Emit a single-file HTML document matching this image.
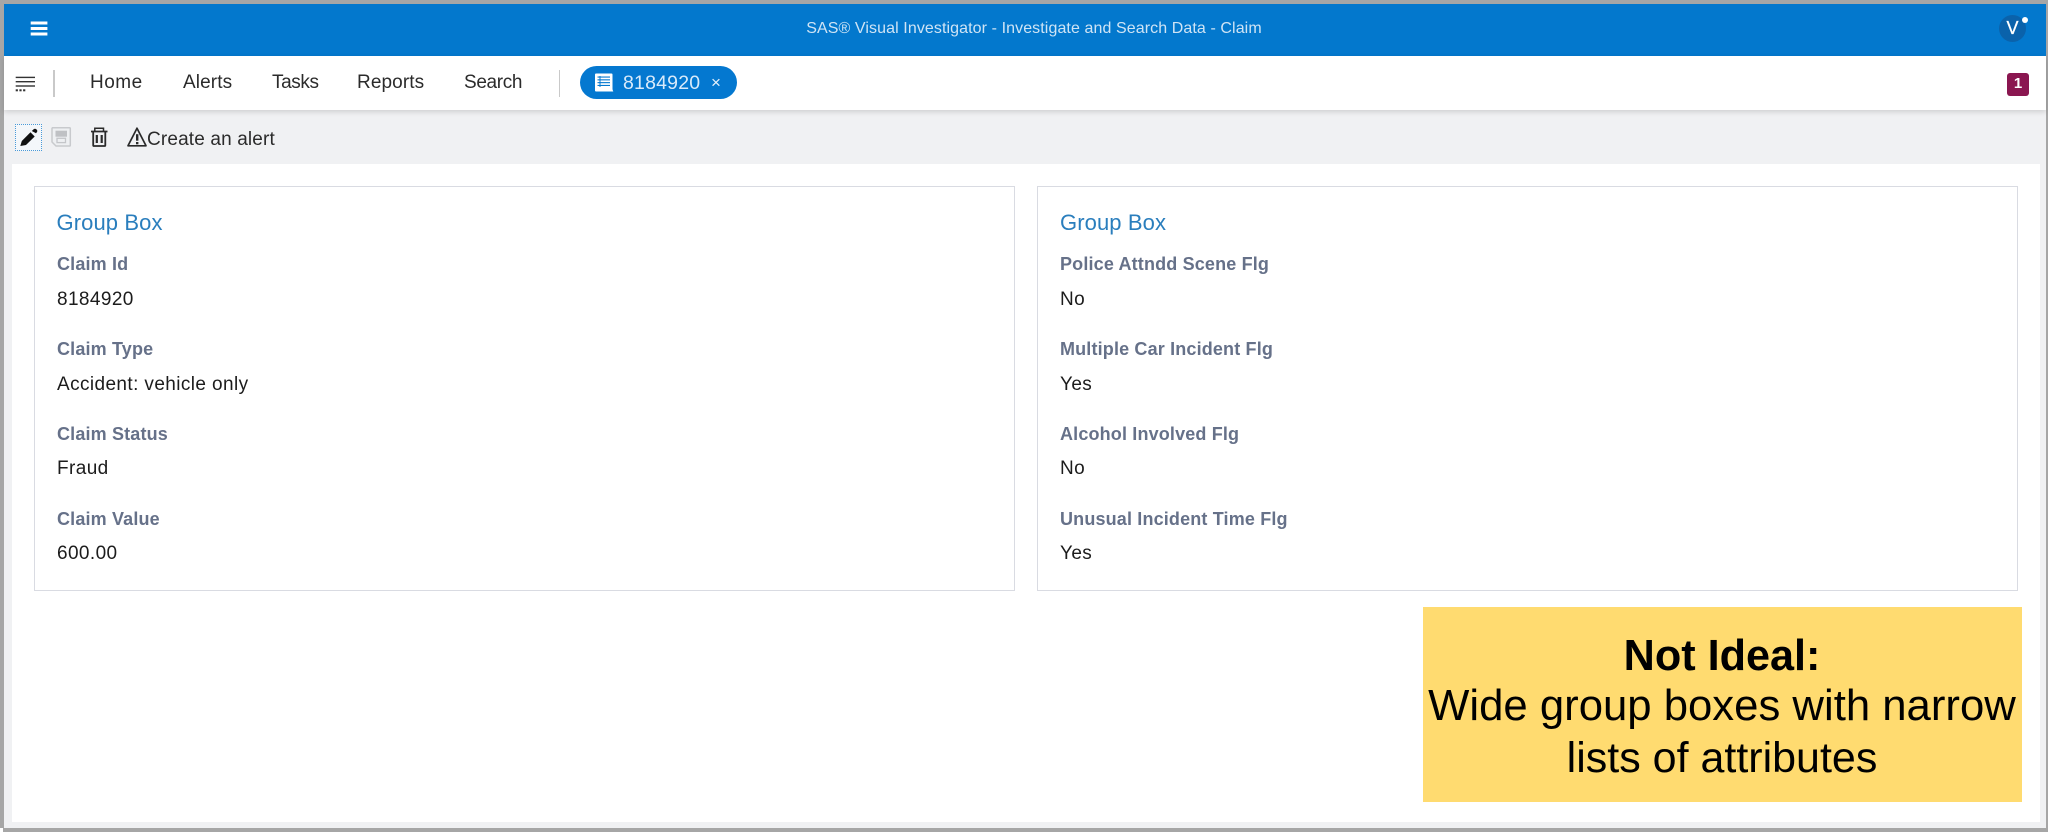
<!DOCTYPE html>
<html lang="en">
<head>
<meta charset="utf-8">
<title>SAS Visual Investigator</title>
<style>
html,body{margin:0;padding:0;background:#fff}
#p{position:relative;width:2048px;height:832px;overflow:hidden;background:#fff;font-family:"Liberation Sans",sans-serif}
#p div{position:absolute}
.t{position:absolute;white-space:nowrap;height:30px;line-height:30px}
.nav{font-size:19px;color:#2b2b2b;top:68px;letter-spacing:.1px}
.lab{font-size:18px;font-weight:bold;color:#667189;letter-spacing:.16px}
.val{font-size:19px;color:#1c1c1c;letter-spacing:.4px}
.gb{font-size:22px;color:#2a7ebd;top:208px;letter-spacing:.1px}
.box{background:#fff;border:1.5px solid #d9dbe2;box-sizing:border-box}
.y{color:#000;left:1422px;width:600px;text-align:center;height:52px;line-height:52px;position:absolute;white-space:nowrap}
svg{position:absolute;overflow:visible}
</style>
</head>
<body>
<div id="p">
<div style="left:0;top:0;width:2046px;height:828px;background:#f0f1f3"></div>
<div style="left:12px;top:164px;width:2028px;height:658px;background:#fff"></div>
<div style="left:0;top:0;width:2048px;height:3.5px;background:#a6a6a6"></div>
<div style="left:0;top:0;width:3.5px;height:828px;background:#a6a6a6"></div>
<div style="left:2046px;top:0;width:2px;height:832px;background:#a6a6a6"></div>
<div style="left:3px;top:828px;width:2045px;height:4px;background:#a6a6a6"></div>
<div style="left:3.5px;top:3.5px;width:2042.5px;height:52px;background:#0378cd"></div>
<div style="left:3.5px;top:55.5px;width:2042.5px;height:54.5px;background:#fff;box-shadow:0 2px 5px rgba(0,0,0,.14)"></div>

<svg style="left:0;top:0" width="60" height="60"><g fill="#fff"><rect x="30.700" y="21.500" width="16.700" height="3"/><rect x="30.700" y="27" width="16.700" height="3"/><rect x="30.700" y="32.500" width="16.700" height="3"/></g></svg>
<span class="t" style="left:806px;top:14px;font-size:16px;color:#cfe4f5;width:456px;text-align:center;letter-spacing:.09px">SAS® Visual Investigator - Investigate and Search Data - Claim</span>

<div style="left:1999px;top:14.500px;width:27px;height:27px;border-radius:50%;background:#0a62ab"></div>
<span class="t" style="left:1999px;top:13px;width:27px;text-align:center;font-size:18px;color:#fff;-webkit-text-stroke:.3px #fff">V</span>
<div style="left:2021.500px;top:16.500px;width:6.500px;height:6.500px;border-radius:50%;background:#fff"></div>

<svg style="left:0;top:60px" width="60" height="50"><g fill="#333"><rect x="15.700" y="16.700" width="19.300" height="1.400"/><rect x="15.700" y="21" width="19.300" height="1.400"/><rect x="15.700" y="25.300" width="19.300" height="1.400"/><rect x="15.700" y="29.300" width="2.200" height="2"/><rect x="19.400" y="29.300" width="2.200" height="2"/><rect x="23.100" y="29.300" width="2.200" height="2"/></g></svg>
<div style="left:53px;top:70px;width:1.500px;height:27px;background:#c9c9c9"></div>
<span class="t nav" style="left:90px;letter-spacing:.5px">Home</span>
<span class="t nav" style="left:183px">Alerts</span>
<span class="t nav" style="left:272px;letter-spacing:-.4px">Tasks</span>
<span class="t nav" style="left:357px">Reports</span>
<span class="t nav" style="left:464px;letter-spacing:-.35px">Search</span>
<div style="left:558.500px;top:70px;width:1.500px;height:27px;background:#c9c9c9"></div>

<div style="left:579.500px;top:66px;width:157px;height:33px;border-radius:17px;background:#0478d0"></div>
<svg style="left:594px;top:73px" width="20" height="20"><path d="M1 1.500Q1 .5 2 .5H17.500Q18.500 .5 18.500 1.500V16Q18.500 17 19.300 18.500H2Q1 18.500 1 17.500Z" fill="#fff"/><g fill="#0478d0"><rect x="3.500" y="3.500" width="12.500" height="1.100"/><rect x="3.500" y="6.300" width="12.500" height="1.100"/><rect x="3.500" y="9.100" width="12.500" height="1.100"/><rect x="3.500" y="11.900" width="12.500" height="1.100"/><rect x="5.500" y="3" width="1" height="11"/></g></svg>
<span class="t" style="left:623px;top:68px;font-size:19.500px;color:#d8eafa;letter-spacing:.2px">8184920</span>
<span class="t" style="left:711px;top:68px;font-size:17px;color:#e6f1fb">×</span>

<div style="left:2007px;top:73px;width:22px;height:23px;border-radius:3px;background:#8a1650"></div>
<span class="t" style="left:2007px;top:69px;width:22px;text-align:center;font-size:15px;font-weight:bold;color:#fff">1</span>

<div style="left:14.500px;top:123.500px;width:27.500px;height:27.500px;box-sizing:border-box;border:1px dotted #4a9ad8;background:#f4f7fa"></div>
<svg style="left:20px;top:128px" width="18" height="19"><path d="M.3 18L1.800 13L10.500 4.300L14.700 8.500L6 17Z" fill="#111"/><path d="M11.800 3L13.700 1.200Q15 .2 16.200 1.200L16.800 1.800Q17.800 3 16.800 4.300L16 5.200Z" fill="#111"/></svg>
<svg style="left:51px;top:127px" width="20" height="20"><path d="M1.500 .8H18.500Q19.300 .8 19.300 1.600V18.200Q19.300 19 18.500 19H5L1 15V1.300Z" fill="#eef0f2" stroke="#c8cacd" stroke-width="1.500"/><rect x="4.500" y="3.700" width="11.500" height="6" fill="#bfc1c4"/><rect x="6" y="11.300" width="8.500" height="4.300" fill="none" stroke="#c4c6c9" stroke-width="1.300"/></svg>
<svg style="left:91px;top:127px" width="18" height="21"><g fill="none" stroke="#2a2a2a"><path d="M0 4.500H16.500" stroke-width="1.800"/><path d="M3.800 4V1.300H12.500V4" stroke-width="1.500"/><path d="M2.200 5V18.200Q2.200 19 3 19H13.500Q14.300 19 14.300 18.200V5" stroke-width="1.800"/><path d="M5.800 8V16M10.700 8V16" stroke-width="2.200"/></g></svg>
<svg style="left:127px;top:127px" width="21" height="21"><path d="M10 1.200L19 18.800H1Z" fill="none" stroke="#2a2a2a" stroke-width="1.700" stroke-linejoin="round"/><rect x="9" y="7.200" width="2.400" height="6.500" fill="#2a2a2a"/><rect x="9" y="15" width="2.400" height="2.300" fill="#2a2a2a"/></svg>
<span class="t" style="left:147px;top:125px;font-size:19px;color:#2b2b2b;letter-spacing:.15px">Create an alert</span>

<div class="box" style="left:33.500px;top:186px;width:981px;height:405px"></div>
<div class="box" style="left:1037px;top:186px;width:981px;height:405px"></div>

<span class="t gb" style="left:56.500px">Group Box</span>
<span class="t lab" style="left:57px;top:249px">Claim Id</span>
<span class="t val" style="left:57px;top:285px">8184920</span>
<span class="t lab" style="left:57px;top:334px">Claim Type</span>
<span class="t val" style="left:57px;top:370px">Accident: vehicle only</span>
<span class="t lab" style="left:57px;top:419px">Claim Status</span>
<span class="t val" style="left:57px;top:454px">Fraud</span>
<span class="t lab" style="left:57px;top:504px">Claim Value</span>
<span class="t val" style="left:57px;top:539px">600.00</span>

<span class="t gb" style="left:1060px">Group Box</span>
<span class="t lab" style="left:1060px;top:249px">Police Attndd Scene Flg</span>
<span class="t val" style="left:1060px;top:285px">No</span>
<span class="t lab" style="left:1060px;top:334px">Multiple Car Incident Flg</span>
<span class="t val" style="left:1060px;top:370px">Yes</span>
<span class="t lab" style="left:1060px;top:419px">Alcohol Involved Flg</span>
<span class="t val" style="left:1060px;top:454px">No</span>
<span class="t lab" style="left:1060px;top:504px">Unusual Incident Time Flg</span>
<span class="t val" style="left:1060px;top:539px">Yes</span>

<div style="left:1422.500px;top:607px;width:599px;height:195px;background:#ffdb70"></div>
<span class="y" style="top:630px;font-weight:bold;font-size:43.2px">Not Ideal:</span>
<span class="y" style="top:680px;font-size:43.7px">Wide group boxes with narrow</span>
<span class="y" style="top:732px;font-size:43px">lists of attributes</span>
</div>
</body>
</html>
